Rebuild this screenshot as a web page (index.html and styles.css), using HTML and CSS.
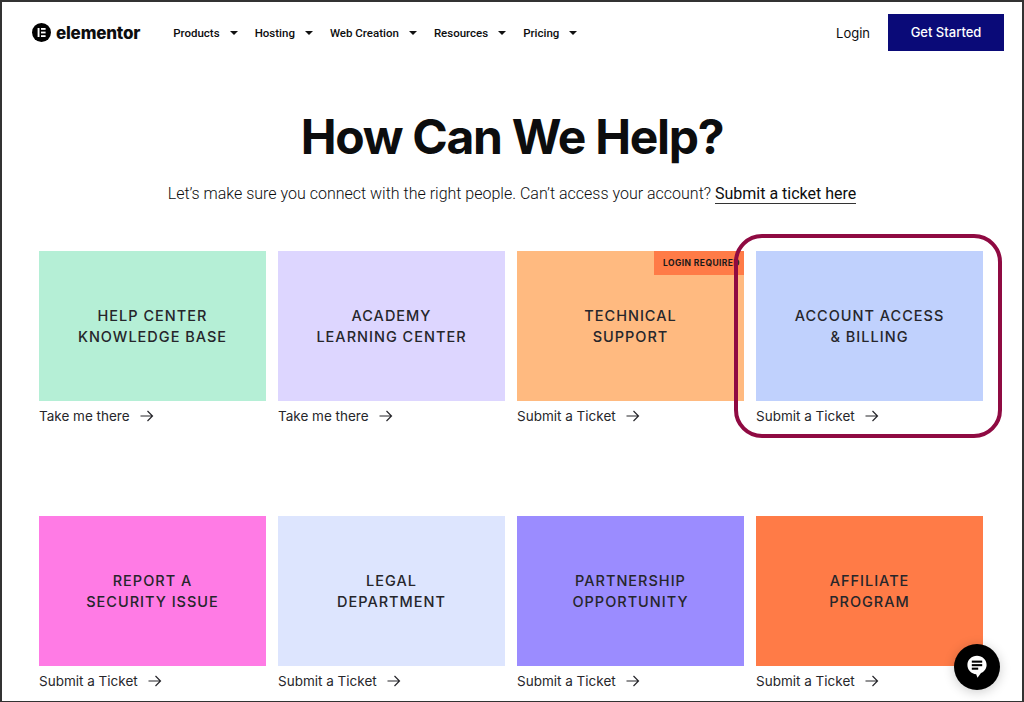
FILE: index.html
```html
<!DOCTYPE html>
<html lang="en">

<head>
	<meta charset="UTF-8">
	<title>How Can We Help?</title>
	<link rel="stylesheet" href="styles.css">
</head>

<body>

	<div class="frame">

		<header class="topbar">
			<a class="logo" href="#">
				<svg class="logo-mark" width="19" height="19" viewBox="0 0 19 19">
					<circle cx="9.5" cy="9.5" r="9.5" fill="#000" />
					<rect x="5.6" y="5" width="1.9" height="9" fill="#fff" />
					<rect x="9" y="5" width="4.6" height="1.8" fill="#fff" />
					<rect x="9" y="8.6" width="4.6" height="1.8" fill="#fff" />
					<rect x="9" y="12.2" width="4.6" height="1.8" fill="#fff" />
				</svg>
				<span class="logo-text">elementor</span>
			</a>
			<nav class="nav">
				<a href="#">Products</a>
				<a href="#">Hosting</a>
				<a href="#">Web Creation</a>
				<a href="#">Resources</a>
				<a href="#">Pricing</a>
			</nav>
			<a class="login" href="#">Login</a>
			<a class="get-started" href="#">Get Started</a>
		</header>

		<section class="intro">
			<h1>How Can We Help?</h1>
			<p>Let’s make sure you connect with the right people. Can’t access your account? <a href="#">Submit a ticket here</a></p>
		</section>

		<section class="cards">
			<div class="card">
				<div class="tile green">Help Center<br>Knowledge Base</div>
				<a class="card-link" href="#">Take me there <svg class="arrow" width="14" height="12" viewBox="0 0 14 12"><path d="M0.5 6H12.5M7.5 1L12.5 6L7.5 11" /></svg></a>
			</div>
			<div class="card">
				<div class="tile lilac">Academy<br>Learning Center</div>
				<a class="card-link" href="#">Take me there <svg class="arrow" width="14" height="12" viewBox="0 0 14 12"><path d="M0.5 6H12.5M7.5 1L12.5 6L7.5 11" /></svg></a>
			</div>
			<div class="card">
				<div class="tile peach">
					<span class="badge">Login Required</span>
					Technical<br>Support
				</div>
				<a class="card-link" href="#">Submit a Ticket <svg class="arrow" width="14" height="12" viewBox="0 0 14 12"><path d="M0.5 6H12.5M7.5 1L12.5 6L7.5 11" /></svg></a>
			</div>
			<div class="card">
				<div class="tile blue">Account Access<br>&amp; Billing</div>
				<a class="card-link" href="#">Submit a Ticket <svg class="arrow" width="14" height="12" viewBox="0 0 14 12"><path d="M0.5 6H12.5M7.5 1L12.5 6L7.5 11" /></svg></a>
			</div>
			<div class="card">
				<div class="tile pink">Report a<br>Security Issue</div>
				<a class="card-link" href="#">Submit a Ticket <svg class="arrow" width="14" height="12" viewBox="0 0 14 12"><path d="M0.5 6H12.5M7.5 1L12.5 6L7.5 11" /></svg></a>
			</div>
			<div class="card">
				<div class="tile pale">Legal<br>Department</div>
				<a class="card-link" href="#">Submit a Ticket <svg class="arrow" width="14" height="12" viewBox="0 0 14 12"><path d="M0.5 6H12.5M7.5 1L12.5 6L7.5 11" /></svg></a>
			</div>
			<div class="card">
				<div class="tile violet">Partnership<br>Opportunity</div>
				<a class="card-link" href="#">Submit a Ticket <svg class="arrow" width="14" height="12" viewBox="0 0 14 12"><path d="M0.5 6H12.5M7.5 1L12.5 6L7.5 11" /></svg></a>
			</div>
			<div class="card">
				<div class="tile orange">Affiliate<br>Program</div>
				<a class="card-link" href="#">Submit a Ticket <svg class="arrow" width="14" height="12" viewBox="0 0 14 12"><path d="M0.5 6H12.5M7.5 1L12.5 6L7.5 11" /></svg></a>
			</div>
		</section>

		<!-- annotation drawn over the fourth card -->
		<div class="highlight"></div>

		<a class="chat" href="#">
			<svg width="26" height="30" viewBox="0 0 26 30">
				<path d="M13 1C6.4 1 1 6.1 1 12.5C1 18.6 5.9 23.5 12 24L13.6 28.5L18 22.6C22.2 20.8 25 17 25 12.5C25 6.1 19.6 1 13 1Z" fill="#fff" />
				<rect x="6.5" y="7" width="13" height="2.6" fill="#000" />
				<rect x="6.5" y="11.4" width="13" height="2.6" fill="#000" />
				<rect x="6.5" y="15.8" width="8" height="2.6" fill="#000" />
			</svg>
		</a>

	</div> <!-- end frame -->

</body>

</html>
```

FILE: styles.css
```css
* {
	box-sizing: border-box;
}

html,
body {
	height: 100%;
	margin: 0;
}

body {
	background: #fff;
	color: #0c0d0e;
	font-family: Inter, "Liberation Sans", sans-serif;
	overflow: hidden;
}

a {
	color: inherit;
	text-decoration: none;
}

.frame {
	border: 2px solid #333;
	border-bottom-width: 1px;
	height: 702px;
	overflow: hidden;
	position: relative;
}

.topbar {
	align-items: center;
	display: flex;
	height: 61px;
	padding: 0 18px 0 30px;
}

.logo {
	align-items: center;
	display: flex;
	gap: 5px;
	margin-right: 33px;
}

.logo-text {
	font-size: 17px;
	font-weight: 800;
	letter-spacing: -.2px;
}

.nav {
	display: flex;
	font-family: Roboto, sans-serif;
	font-size: 11.5px;
	font-weight: 500;
	gap: 17px;
}

.nav a {
	align-items: center;
	display: flex;
	gap: 10px;
}

.nav a:after {
	border-left: 4px solid transparent;
	border-right: 4px solid transparent;
	border-top: 4px solid #111;
	content: "";
	height: 0;
	width: 0;
}

.login {
	font-size: 13px;
	margin-left: auto;
	margin-right: 18px;
}

.get-started {
	background: #0a0a78;
	color: #fff;
	font-size: 13px;
	font-weight: 500;
	line-height: 37px;
	text-align: center;
	width: 116px;
}

.intro {
	text-align: center;
}

.intro h1 {
	font-size: 48px;
	font-weight: 700;
	letter-spacing: -1.3px;
	line-height: 58px;
	margin: 45px 0 0;
}

.intro p {
	font-family: Roboto, sans-serif;
	font-size: 16px;
	font-weight: 300;
	line-height: 24px;
	margin: 16px 0 0;
}

.intro p a {
	border-bottom: 1px solid #333;
	font-weight: 400;
}

.cards {
	column-gap: 12px;
	display: grid;
	grid-template-columns: repeat(4, 227px);
	margin: 45px 0 0 37px;
	row-gap: 85px;
}

.tile {
	align-items: center;
	color: #26262b;
	display: flex;
	font-size: 14.5px;
	font-weight: 500;
	height: 150px;
	justify-content: center;
	letter-spacing: 1px;
	line-height: 21px;
	position: relative;
	text-align: center;
	text-transform: uppercase;
}

.green {
	background: #b5efd6;
}

.lilac {
	background: #ddd6ff;
}

.peach {
	background: #ffba80;
}

.blue {
	background: #c0d1fd;
}

.pink {
	background: #ff7be5;
}

.pale {
	background: #dde5fe;
}

.violet {
	background: #9b8cff;
}

.orange {
	background: #ff7b47;
}

.badge {
	background: #ff7b47;
	color: #1a1a1a;
	font-size: 8.5px;
	font-weight: 700;
	letter-spacing: .4px;
	line-height: 24px;
	padding-left: 5px;
	position: absolute;
	right: 0;
	top: 0;
	white-space: nowrap;
	width: 90px;
}

.card-link {
	align-items: center;
	color: #26262b;
	display: flex;
	font-size: 13.5px;
	gap: 10px;
	line-height: 30px;
}

.arrow {
	fill: none;
	stroke: #26262b;
	stroke-width: 1.2;
}

.highlight {
	border: 4px solid #8f0a42;
	border-radius: 28px;
	height: 204px;
	left: 732px;
	position: absolute;
	top: 232px;
	width: 268px;
}

.chat {
	align-items: center;
	background: #000;
	border-radius: 50%;
	box-shadow: 0 2px 12px rgba(0, 0, 0, .2);
	display: flex;
	height: 46px;
	justify-content: center;
	left: 952px;
	position: absolute;
	top: 642px;
	width: 46px;
}

.chat svg {
	height: 24px;
	width: 22px;
}
```
